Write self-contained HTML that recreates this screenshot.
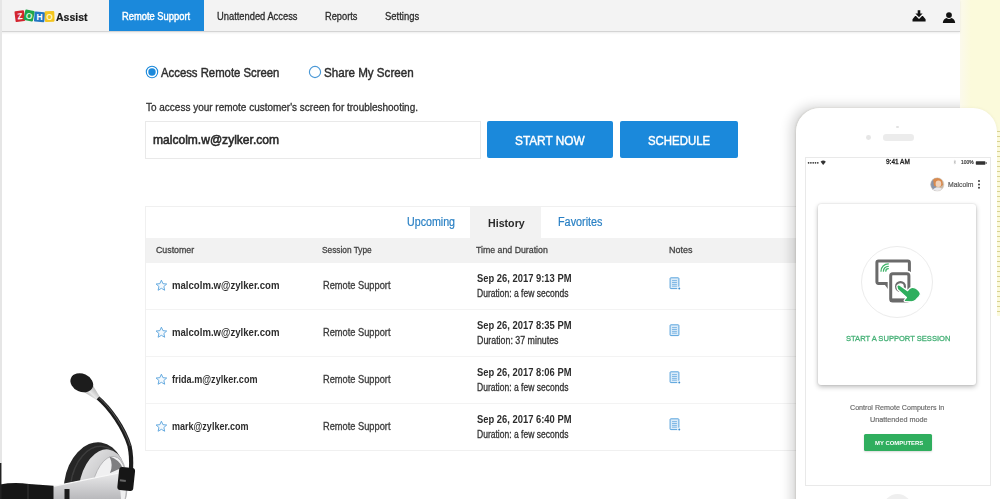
<!DOCTYPE html>
<html><head><meta charset="utf-8"><title>Zoho Assist</title>
<style>
html,body{margin:0;padding:0;}
body{width:1000px;height:499px;overflow:hidden;position:relative;background:#fbfadb;font-family:"Liberation Sans",sans-serif;}
.a{position:absolute;}
.t{position:absolute;white-space:pre;transform-origin:0 50%;font-family:"Liberation Sans",sans-serif;}
#win{left:0;top:0;width:960.2px;height:499px;background:#fff;}
#ystrip{left:960.2px;top:0;width:11px;height:499px;background:linear-gradient(90deg,#fbf9ec,#fbfadb);}
#lstrip{left:0;top:0;width:2px;height:499px;background:#e6e6e6;}
#nav{left:0;top:0;width:960.2px;height:31px;background:#f3f3f3;border-bottom:1px solid #d4d4d4;box-shadow:0 1px 2px rgba(0,0,0,0.08);}
#tab{left:108.6px;top:0;width:95.2px;height:31.3px;background:#1b89db;}
.btn{background:#1b89db;border-radius:2px;height:37px;top:121px;}
#inp{left:145px;top:121px;width:334px;height:36px;border:1px solid #e9e9e9;background:#fff;}
#panel{left:145px;top:205.5px;width:700px;height:243px;border:1px solid #f0f0f0;border-right:none;background:#fff;}
#thead{left:146px;top:237.7px;width:700px;height:25px;background:#f2f2f2;}
#hist{left:469.7px;top:206.5px;width:71.8px;height:32px;background:#f2f2f2;}
.sep{left:146px;width:700px;height:1px;background:#f3f3f3;}
</style></head>
<body>
<div class="a" id="ystrip"></div>
<div class="a" id="win"></div>
<div class="a" id="nav"></div>
<div class="a" id="tab"></div>
<div class="a" id="lstrip"></div>

<!-- zoho logo -->
<svg class="a" style="left:13px;top:8px" width="44" height="16" viewBox="0 0 44 16">
  <g font-family="Liberation Sans" font-weight="700" font-size="8.5" fill="#fff" text-anchor="middle">
  <rect x="2" y="2.6" width="9.6" height="11" rx="1" fill="#d3252f" transform="rotate(-7 7 8)"/>
  <text x="6.9" y="11.3" transform="rotate(-7 7 8)">Z</text>
  <rect x="11.2" y="2.2" width="9.6" height="10.6" rx="1" fill="#1fa64b" transform="rotate(12 16 8)"/>
  <text x="16" y="10.9" transform="rotate(12 16 8)" fill="#d9f7dd">O</text>
  <rect x="21.3" y="3.8" width="10.4" height="10" rx="1" fill="#2376c3" transform="rotate(5 26 9)"/>
  <text x="26.5" y="11.9">H</text>
  <rect x="31.8" y="3.2" width="9.6" height="10.6" rx="1" fill="#f4c51f" transform="rotate(-2 36 8)"/>
  <text x="36.6" y="11.6" fill="#fff6c4">O</text>
  </g>
</svg>

<!-- nav icons -->
<svg class="a" style="left:912px;top:10px" width="14" height="12" viewBox="0 0 14 12">
  <path d="M5.700 0.300 h2.600 v3.300 h2.300 L7 7.300 L3.400 3.600 h2.300 z" fill="#111"/>
  <path d="M3.100 5.900 L0.500 9.300 V11.500 H13.600 V9.300 L10.900 5.900 H10 L7 9.100 L4 5.900 Z" fill="#111"/>
</svg>
<svg class="a" style="left:942px;top:11.5px" width="14" height="12" viewBox="0 0 14 12">
  <circle cx="7" cy="3.1" r="2.9" fill="#111"/>
  <path d="M0.8 11 c0.2 -3 2 -4.6 4 -5 c0.6 0.6 1.3 0.9 2.2 0.9 s1.6 -0.3 2.2 -0.9 c2 0.4 3.8 2 4 5 z" fill="#111"/>
</svg>

<!-- radios -->
<svg class="a" style="left:144.700px;top:65.400px" width="14" height="14" viewBox="0 0 14 14">
  <circle cx="7" cy="7" r="5.7" fill="#fff" stroke="#1b89db" stroke-width="1.1"/>
  <circle cx="7" cy="7" r="3.7" fill="#1b89db"/>
</svg>
<svg class="a" style="left:308.300px;top:65.300px" width="14" height="14" viewBox="0 0 14 14">
  <circle cx="7" cy="7" r="5.600" fill="#fff" stroke="#4a98d6" stroke-width="1.150"/>
</svg>

<div class="a" id="inp"></div>
<div class="a btn" style="left:487.4px;width:125.6px"></div>
<div class="a btn" style="left:620px;width:117.7px"></div>

<!-- panel -->
<div class="a" id="panel"></div>
<div class="a" id="hist"></div>
<div class="a" id="thead"></div>
<div class="a sep" style="top:309.3px"></div>
<div class="a sep" style="top:356.3px"></div>
<div class="a sep" style="top:403.3px"></div>

<svg width="0" height="0" style="position:absolute"><defs>
  <symbol id="star" viewBox="0 0 14 14"><path d="M7 1.300 L8.700 5.100 L12.800 5.500 L9.700 8.200 L10.600 12.300 L7 10.200 L3.400 12.300 L4.300 8.200 L1.200 5.500 L5.300 5.100 Z" fill="#f4f9fd" stroke="#5ba4dd" stroke-width="1" stroke-linejoin="round"/></symbol>
  <symbol id="note" viewBox="0 0 14 15"><rect x="1.200" y="0.900" width="9.800" height="12" rx="0.800" fill="#dcecf9" stroke="#58a2dc" stroke-width="1.100"/><path d="M3.400 4 h5.400 M3.400 6.100 h5.400 M3.400 8.200 h5.400 M3.400 10.200 h5.400" stroke="#58a2dc" stroke-width="0.800"/></symbol>
  <symbol id="noteplus" viewBox="0 0 14 15"><rect x="1.200" y="0.900" width="9.800" height="12" rx="0.800" fill="#dcecf9" stroke="#58a2dc" stroke-width="1.100"/><path d="M3.400 4 h5.400 M3.400 6.100 h5.400 M3.400 8.200 h5.400 M3.400 10.200 h5.400" stroke="#58a2dc" stroke-width="0.800"/><circle cx="11.300" cy="12.700" r="2.100" fill="#fff"/><circle cx="11.400" cy="12.800" r="1.100" fill="#3f8fd0"/></symbol>
</defs></svg>
<svg class="a" style="left:155.200px;top:279.300px" width="12.800" height="12.800"><use href="#star"/></svg>
<svg class="a" style="left:155.200px;top:326.300px" width="12.800" height="12.800"><use href="#star"/></svg>
<svg class="a" style="left:155.200px;top:373.300px" width="12.800" height="12.800"><use href="#star"/></svg>
<svg class="a" style="left:155.200px;top:420.300px" width="12.800" height="12.800"><use href="#star"/></svg>
<svg class="a" style="left:669.200px;top:276.700px" width="12.600" height="13.500"><use href="#noteplus"/></svg>
<svg class="a" style="left:669.200px;top:323.700px" width="12.600" height="13.500"><use href="#note"/></svg>
<svg class="a" style="left:669.200px;top:370.700px" width="12.600" height="13.500"><use href="#noteplus"/></svg>
<svg class="a" style="left:669.200px;top:417.700px" width="12.600" height="13.500"><use href="#noteplus"/></svg>


<!-- phone -->
<div class="a" style="left:0;top:0;width:960.200px;height:499px;overflow:hidden;"><div class="a" style="left:796px;top:107.700px;width:200.600px;height:460px;border-radius:24px;background:#fff;box-shadow:-5px -2px 12px rgba(0,0,0,0.160), -1px 0 2px rgba(0,0,0,0.060);"></div></div>
<div class="a" style="left:796px;top:107.700px;width:200.600px;height:460px;border-radius:24px;background:#fff;box-shadow:0 0 3px rgba(120,110,40,0.100);"></div>
<div class="a" style="left:804.5px;top:157.2px;width:184.6px;height:327px;border:1px solid #e9e9e9;background:#fff;"></div>
<!-- speaker / camera -->
<div class="a" style="left:882.7px;top:134.2px;width:31px;height:6.4px;border-radius:3.2px;background:#ececec;"></div>
<div class="a" style="left:866px;top:135px;width:4.8px;height:4.8px;border-radius:50%;background:#e6e6e6;"></div>
<div class="a" style="left:896.4px;top:125.6px;width:2.4px;height:2.4px;border-radius:50%;background:#e2e2e2;"></div>
<!-- home button -->
<div class="a" style="left:883px;top:494.2px;width:29px;height:29px;border-radius:50%;background:#efefef;"></div>
<!-- status bar -->
<svg class="a" style="left:806px;top:158px" width="184" height="10" viewBox="0 0 184 10">
  <g fill="#333">
    <circle cx="2.6" cy="4.8" r="0.85"/><circle cx="4.9" cy="4.8" r="0.85"/><circle cx="7.2" cy="4.8" r="0.85"/><circle cx="9.5" cy="4.8" r="0.85"/><circle cx="11.8" cy="4.8" r="0.85"/>
    <path d="M14.6 3.7 a4 4 0 0 1 5.2 0 l-2.6 3.2 z"/>
    <rect x="169.8" y="3.3" width="9.6" height="3.4" rx="0.6"/>
    <rect x="179.8" y="4.2" width="0.9" height="1.6"/>
  </g>
  <path d="M147.8 3.4 l1.9 1.6 l-1 0.9 v-3.6 l1 0.9 l-1.9 1.6" stroke="#999" stroke-width="0.4" fill="none"/>
</svg>
<!-- avatar -->
<svg class="a" style="left:930px;top:177px" width="15" height="15" viewBox="0 0 15 15">
  <defs><clipPath id="av"><circle cx="7.3" cy="7.4" r="6.7"/></clipPath></defs>
  <g clip-path="url(#av)">
    <rect width="15" height="15" fill="#c9b9a6"/>
    <rect x="0" y="0" width="6" height="15" fill="#8a94a8"/>
    <path d="M3 2 q5 -3 9 1 l1 5 l-3 2 l-6 -1 z" fill="#d98a4e"/>
    <ellipse cx="8.4" cy="6.8" rx="2.8" ry="3.2" fill="#f0d2bb"/>
    <path d="M2 15 q1 -5 6 -4.5 q5 0 6 4.5 z" fill="#e9e9ee"/>
  </g>
  <circle cx="7.3" cy="7.4" r="6.7" fill="none" stroke="#d8d0c8" stroke-width="0.5"/>
</svg>
<div class="a" style="left:978.200px;top:179.900px;width:2.100px;height:2.100px;background:#3c3c3c;border-radius:50%;box-shadow:0 3.400px 0 #3c3c3c,0 6.800px 0 #3c3c3c;"></div>
<!-- card -->
<div class="a" style="left:818.2px;top:204px;width:158.2px;height:180.6px;border-radius:3px;background:#fff;box-shadow:0 2px 5px rgba(0,0,0,0.26),0 0 2px rgba(0,0,0,0.14);"></div>
<div class="a" style="left:861.1px;top:245.9px;width:72px;height:72px;border-radius:50%;border:1px solid #ececec;box-sizing:border-box;background:#fff;"></div>
<!-- support icon -->
<svg class="a" style="left:870px;top:255px" width="60" height="55" viewBox="0 0 60 55">
  <!-- monitor -->
  <path d="M39.400 17 V7.700 a1.600 1.600 0 0 0 -1.600 -1.600 H8.500 a1.600 1.600 0 0 0 -1.600 1.600 V26.800 a1.600 1.600 0 0 0 1.600 1.600 H19" fill="none" stroke="#6a6a6a" stroke-width="3"/>
  <path d="M14.600 29.600 H18.100 V34.200 Z" fill="#6a6a6a"/>
  <!-- wifi -->
  <g fill="none" stroke="#3db267" stroke-width="1.250" stroke-linecap="round">
    <path d="M15.800 16.200 A2.500 2.500 0 0 1 18.300 13.700"/>
    <path d="M13.400 16.200 A4.900 4.900 0 0 1 18.300 11.300"/>
    <path d="M11 16.200 A7.300 7.300 0 0 1 18.300 8.900"/>
  </g>
  <!-- tablet -->
  <rect x="19.400" y="17.400" width="20.800" height="29.900" rx="2.600" fill="#fff" stroke="#fff" stroke-width="3.400"/>
  <rect x="20.700" y="18.700" width="18.200" height="27.300" rx="2" fill="#fff" stroke="#6a6a6a" stroke-width="3"/>
  <rect x="20" y="43.400" width="19.600" height="3.400" fill="#6a6a6a"/>
  <circle cx="30.500" cy="31.500" r="4.400" fill="#fff" stroke="#6a6a6a" stroke-width="2.200"/>
  <!-- hand -->
  <path d="M27 32.200 C26.300 30.600 28.200 29.200 29.800 30.200 L37.600 35.600 L39.600 33.400 C41 32.400 43.600 32.200 45 32.800 L47.600 34.400 C49 35.600 50.400 37.400 50.400 38.800 C50.400 39.800 49.800 40.600 49.200 41.400 L45.600 45.200 C44.600 46.200 43 46.800 41.400 46.800 L35.600 46.600 C34.200 46.600 33.800 45.400 34.600 44.600 L36.400 42.600 L27.600 34.600 Z" fill="#2fae5e" stroke="#fff" stroke-width="1.300" stroke-linejoin="round"/>
</svg>
<!-- my computers button -->
<div class="a" style="left:863.9px;top:434.1px;width:67.9px;height:17.4px;background:#2fae5e;border-radius:1.5px;box-shadow:0 1px 2px rgba(0,0,0,0.15);"></div>
<!-- dotted strip right -->
<div class="a" style="left:996.800px;top:131px;width:3.200px;height:185px;background:repeating-linear-gradient(180deg,#d9d191 0,#d9d191 1.300px,#fbfadc 1.300px,#fbfadc 5px);filter:blur(0.300px);"></div>
<div class="a" style="left:996.800px;top:316px;width:3.200px;height:183px;background:#fff;"></div>


<span class="t" style="left:56.4px;top:8.6px;font-size:11.5px;line-height:16.1px;font-weight:700;color:#1a1a1a;transform:scaleX(0.9122);-webkit-text-stroke:0.2px currentColor;">Assist</span>
<span class="t" style="left:121.9px;top:8.5px;font-size:11px;line-height:15.4px;font-weight:400;color:#ffffff;transform:scaleX(0.8501);-webkit-text-stroke:0.45px currentColor;">Remote Support</span>
<span class="t" style="left:217.0px;top:8.5px;font-size:11px;line-height:15.4px;font-weight:400;color:#2b2b2b;transform:scaleX(0.8492);-webkit-text-stroke:0.3px currentColor;">Unattended Access</span>
<span class="t" style="left:325.0px;top:8.5px;font-size:11px;line-height:15.4px;font-weight:400;color:#2b2b2b;transform:scaleX(0.8435);-webkit-text-stroke:0.3px currentColor;">Reports</span>
<span class="t" style="left:384.5px;top:8.5px;font-size:11px;line-height:15.4px;font-weight:400;color:#2b2b2b;transform:scaleX(0.8604);-webkit-text-stroke:0.3px currentColor;">Settings</span>
<span class="t" style="left:161.2px;top:64.1px;font-size:13px;line-height:18.2px;font-weight:400;color:#2e2e2e;transform:scaleX(0.8716);-webkit-text-stroke:0.45px currentColor;">Access Remote Screen</span>
<span class="t" style="left:323.8px;top:64.1px;font-size:13px;line-height:18.2px;font-weight:400;color:#2e2e2e;transform:scaleX(0.8921);-webkit-text-stroke:0.45px currentColor;">Share My Screen</span>
<span class="t" style="left:145.6px;top:100.6px;font-size:10px;line-height:14.0px;font-weight:400;color:#333;transform:scaleX(0.9978);-webkit-text-stroke:0.3px currentColor;">To access your remote customer's screen for troubleshooting.</span>
<span class="t" style="left:153.0px;top:131.8px;font-size:12px;line-height:16.8px;font-weight:400;color:#2a2a2a;transform:scaleX(1.0037);-webkit-text-stroke:0.55px currentColor;">malcolm.w@zylker.com</span>
<span class="t" style="left:515.0px;top:131.6px;font-size:13px;line-height:18.2px;font-weight:400;color:#ffffff;transform:scaleX(0.9091);-webkit-text-stroke:0.45px currentColor;">START NOW</span>
<span class="t" style="left:647.5px;top:131.6px;font-size:13px;line-height:18.2px;font-weight:400;color:#ffffff;transform:scaleX(0.8772);-webkit-text-stroke:0.45px currentColor;">SCHEDULE</span>
<span class="t" style="left:406.5px;top:214.1px;font-size:12px;line-height:16.8px;font-weight:400;color:#2a80c4;transform:scaleX(0.8884);-webkit-text-stroke:0.2px currentColor;">Upcoming</span>
<span class="t" style="left:488.0px;top:214.5px;font-size:11.5px;line-height:16.1px;font-weight:700;color:#2b2b2b;transform:scaleX(0.9262);">History</span>
<span class="t" style="left:558.3px;top:214.1px;font-size:12px;line-height:16.8px;font-weight:400;color:#2a80c4;transform:scaleX(0.9016);-webkit-text-stroke:0.2px currentColor;">Favorites</span>
<span class="t" style="left:155.5px;top:243.3px;font-size:9.5px;line-height:13.3px;font-weight:400;color:#444;transform:scaleX(0.9275);-webkit-text-stroke:0.3px currentColor;">Customer</span>
<span class="t" style="left:321.8px;top:243.3px;font-size:9.5px;line-height:13.3px;font-weight:400;color:#444;transform:scaleX(0.8738);-webkit-text-stroke:0.3px currentColor;">Session Type</span>
<span class="t" style="left:476.0px;top:243.3px;font-size:9.5px;line-height:13.3px;font-weight:400;color:#444;transform:scaleX(0.9229);-webkit-text-stroke:0.3px currentColor;">Time and Duration</span>
<span class="t" style="left:668.6px;top:243.3px;font-size:9.5px;line-height:13.3px;font-weight:400;color:#444;transform:scaleX(0.9425);-webkit-text-stroke:0.3px currentColor;">Notes</span>
<span class="t" style="left:172.0px;top:278.1px;font-size:11px;line-height:15.4px;font-weight:700;color:#2d2d2d;transform:scaleX(0.8723);">malcolm.w@zylker.com</span>
<span class="t" style="left:322.5px;top:278.4px;font-size:10.5px;line-height:14.7px;font-weight:400;color:#3a3a3a;transform:scaleX(0.8827);-webkit-text-stroke:0.3px currentColor;">Remote Support</span>
<span class="t" style="left:476.5px;top:270.6px;font-size:11px;line-height:15.4px;font-weight:700;color:#2d2d2d;transform:scaleX(0.8538);">Sep 26, 2017 9:13 PM</span>
<span class="t" style="left:476.5px;top:287.2px;font-size:10px;line-height:14.0px;font-weight:400;color:#333;transform:scaleX(0.8529);-webkit-text-stroke:0.3px currentColor;">Duration: a few seconds</span>
<span class="t" style="left:172.0px;top:325.1px;font-size:11px;line-height:15.4px;font-weight:700;color:#2d2d2d;transform:scaleX(0.8723);">malcolm.w@zylker.com</span>
<span class="t" style="left:322.5px;top:325.4px;font-size:10.5px;line-height:14.7px;font-weight:400;color:#3a3a3a;transform:scaleX(0.8827);-webkit-text-stroke:0.3px currentColor;">Remote Support</span>
<span class="t" style="left:476.5px;top:317.6px;font-size:11px;line-height:15.4px;font-weight:700;color:#2d2d2d;transform:scaleX(0.8538);">Sep 26, 2017 8:35 PM</span>
<span class="t" style="left:476.5px;top:334.2px;font-size:10px;line-height:14.0px;font-weight:400;color:#333;transform:scaleX(0.8832);-webkit-text-stroke:0.3px currentColor;">Duration: 37 minutes</span>
<span class="t" style="left:172.0px;top:372.1px;font-size:11px;line-height:15.4px;font-weight:700;color:#2d2d2d;transform:scaleX(0.8247);">frida.m@zylker.com</span>
<span class="t" style="left:322.5px;top:372.4px;font-size:10.5px;line-height:14.7px;font-weight:400;color:#3a3a3a;transform:scaleX(0.8827);-webkit-text-stroke:0.3px currentColor;">Remote Support</span>
<span class="t" style="left:476.5px;top:364.6px;font-size:11px;line-height:15.4px;font-weight:700;color:#2d2d2d;transform:scaleX(0.8538);">Sep 26, 2017 8:06 PM</span>
<span class="t" style="left:476.5px;top:381.2px;font-size:10px;line-height:14.0px;font-weight:400;color:#333;transform:scaleX(0.8529);-webkit-text-stroke:0.3px currentColor;">Duration: a few seconds</span>
<span class="t" style="left:172.0px;top:419.1px;font-size:11px;line-height:15.4px;font-weight:700;color:#2d2d2d;transform:scaleX(0.8201);">mark@zylker.com</span>
<span class="t" style="left:322.5px;top:419.4px;font-size:10.5px;line-height:14.7px;font-weight:400;color:#3a3a3a;transform:scaleX(0.8827);-webkit-text-stroke:0.3px currentColor;">Remote Support</span>
<span class="t" style="left:476.5px;top:411.6px;font-size:11px;line-height:15.4px;font-weight:700;color:#2d2d2d;transform:scaleX(0.8538);">Sep 26, 2017 6:40 PM</span>
<span class="t" style="left:476.5px;top:428.2px;font-size:10px;line-height:14.0px;font-weight:400;color:#333;transform:scaleX(0.8529);-webkit-text-stroke:0.3px currentColor;">Duration: a few seconds</span>
<span class="t" style="left:886.0px;top:158.3px;font-size:6.3px;line-height:8.8px;font-weight:400;color:#222;transform:scaleX(1.0299);-webkit-text-stroke:0.3px currentColor;">9:41 AM</span>
<span class="t" style="left:961.0px;top:158.8px;font-size:5.5px;line-height:7.7px;font-weight:400;color:#333;transform:scaleX(0.8879);-webkit-text-stroke:0.2px currentColor;">100%</span>
<span class="t" style="left:947.5px;top:179.8px;font-size:6.5px;line-height:9.1px;font-weight:400;color:#5a5a5a;transform:scaleX(1.0495);-webkit-text-stroke:0.2px currentColor;">Malcolm</span>
<span class="t" style="left:845.6px;top:332.7px;font-size:8px;line-height:11.2px;font-weight:400;color:#45b076;transform:scaleX(0.9455);-webkit-text-stroke:0.3px currentColor;">START A SUPPORT SESSION</span>
<span class="t" style="left:849.6px;top:403.4px;font-size:7.6px;line-height:10.6px;font-weight:400;color:#6e6e6e;transform:scaleX(0.9378);-webkit-text-stroke:0.2px currentColor;">Control Remote Computers in</span>
<span class="t" style="left:869.9px;top:414.7px;font-size:7.6px;line-height:10.6px;font-weight:400;color:#6e6e6e;transform:scaleX(0.9540);-webkit-text-stroke:0.2px currentColor;">Unattended mode</span>
<span class="t" style="left:874.6px;top:438.8px;font-size:5.8px;line-height:8.1px;font-weight:700;color:#ffffff;transform:scaleX(1.0201);">MY COMPUTERS</span>

<!-- headset -->
<svg class="a" style="left:0;top:360px" width="150" height="139" viewBox="0 360 150 139">
  <defs>
    <linearGradient id="sil" x1="0" y1="0" x2="1" y2="1">
      <stop offset="0" stop-color="#e9e9ea"/><stop offset="0.450" stop-color="#c4c4c6"/><stop offset="1" stop-color="#a2a2a5"/>
    </linearGradient>
    <linearGradient id="strap" x1="0" y1="0" x2="0" y2="1">
      <stop offset="0" stop-color="#e9e9ea"/><stop offset="1" stop-color="#b9b9bc"/>
    </linearGradient>
    <linearGradient id="neck" x1="0" y1="1" x2="1" y2="0">
      <stop offset="0" stop-color="#555"/><stop offset="0.45" stop-color="#e8e8e8"/><stop offset="1" stop-color="#777"/>
    </linearGradient>
    <filter id="b1"><feGaussianBlur stdDeviation="0.45"/></filter>
  </defs>
  <g filter="url(#b1)">
  <!-- ear cup ring -->
  <ellipse cx="95" cy="486" rx="31" ry="44" fill="#262626" transform="rotate(8 95 486)"/>
  <ellipse cx="97.500" cy="487" rx="27" ry="41" fill="none" stroke="#3c3c3c" stroke-width="1.500" transform="rotate(8 97.500 487)"/>
  <ellipse cx="103" cy="489.500" rx="24.300" ry="40.500" fill="url(#sil)" transform="rotate(8 103 489.500)"/>
  <ellipse cx="108.500" cy="493" rx="17.500" ry="37" fill="#f0f0f1" stroke="#b4b4b6" stroke-width="0.900" transform="rotate(9 108.500 493)"/>
  <path d="M109.500 456.500 Q119 459.500 122.500 467.500 L110 473 Q113.500 465 109.500 456.500 Z" fill="#7f7f81"/>
  <!-- strap -->
  <path d="M53 486.300 L119 473 L121 499 L53 499 Z" fill="url(#strap)"/>
  <path d="M53 486.300 L119 473" stroke="#f8f8f8" stroke-width="1.200"/>
  <rect x="64.500" y="489" width="5" height="10" fill="#1b1b1b"/>
  <!-- black cushion band -->
  <path d="M0 484.500 q14 -2.500 29 -0.500 l24.500 1.800 v14 H0 Z" fill="#161616"/>
  <path d="M28 484 v15" stroke="#3a3a3a" stroke-width="1"/>
  <rect x="0" y="463" width="1.400" height="36" fill="#222"/>
  <!-- boom -->
  <path d="M97.500 397.500 C110 408, 124 428, 129.500 446 C131 453, 131.500 460, 131 469" fill="none" stroke="#1e1e1e" stroke-width="4.200" stroke-linecap="round"/>
  <path d="M98.500 397.200 C111 408, 124.500 428, 130.300 446" fill="none" stroke="#5a5a5a" stroke-width="0.900"/>
  <!-- neck -->
  <path d="M81.500 390.500 L90.500 381.500 L99.500 396.300 L96.300 399.800 Z" fill="url(#neck)"/>
  <!-- mic head -->
  <ellipse cx="81.800" cy="382.800" rx="11.800" ry="9" fill="#1a1a1a" transform="rotate(24 81.800 382.800)"/>
  <!-- connector -->
  <rect x="118.200" y="467.500" width="16" height="23" rx="3" fill="#171717" transform="rotate(6 126 479)"/>
  <rect x="120" y="480" width="6" height="2" fill="#666" transform="rotate(6 126 479)"/>
  </g>
</svg>

</body></html>
